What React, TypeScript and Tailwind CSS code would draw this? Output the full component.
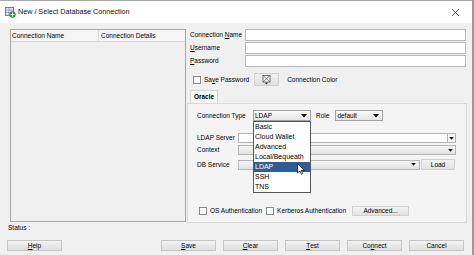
import React from 'react';

const ITEMS = ['Basic', 'Cloud Wallet', 'Advanced', 'Local/Bequeath', 'LDAP', 'SSH', 'TNS'];

function U({ children }: { children: React.ReactNode }) {
  return <span className="underline underline-offset-[1px] decoration-[0.5px]">{children}</span>;
}

function Arrow() {
  return (
    <svg width="6" height="4" viewBox="0 0 6 4">
      <path d="M0 0 H6 L3 3.5 Z" fill="#111" />
    </svg>
  );
}

function Check() {
  return <div className="w-[8px] h-[8px] border border-[#8a8a8a] bg-white shrink-0" />;
}

function Btn({ children, w = 'w-[55px]' }: { children: React.ReactNode; w?: string }) {
  return (
    <div className={`${w} h-[11px] flex items-center justify-center border border-[#c4c4c4] bg-linear-to-b from-[#f3f3f3] to-[#dedede] text-[6.5px] text-black`}>
      {children}
    </div>
  );
}

function Field() {
  return <div className="h-[12px] w-[221px] border border-[#b9b9b9] bg-white" />;
}

export default function App() {
  return (
    <div className="w-[474px] h-[255px] bg-[#9a9a9a] overflow-hidden font-['Liberation_Sans',Arial,sans-serif] text-black">
      <div className="w-[472px] h-[255px] bg-[#f0f0f0] border-t border-[#a8a8a8] flex flex-col">
        {/* title bar */}
        <div className="h-[22px] bg-white flex items-center pl-[5px] pr-[12px] shrink-0">
          <svg width="11" height="11" viewBox="0 0 11 11">
            <rect x="0.5" y="0.5" width="8" height="8" fill="#dfe9f5" stroke="#5a7fae" />
            <path d="M1 3 H8 M1 5.5 H8 M4 1 V8" stroke="#7b9cc6" strokeWidth="0.8" />
            <circle cx="7.5" cy="7.5" r="3.2" fill="#2e9a2e" />
            <path d="M7.5 5.6 V9.4 M5.6 7.5 H9.4" stroke="#fff" strokeWidth="1.1" />
          </svg>
          <span className="ml-[2px] text-[7.2px] text-[#111]">New / Select Database Connection</span>
          <svg className="ml-auto" width="9" height="9" viewBox="0 0 9 9">
            <path d="M1 1 L8 8 M8 1 L1 8" stroke="#333" strokeWidth="0.8" />
          </svg>
        </div>

        <div className="flex pt-[6px] pl-[10px]">
          {/* connection list */}
          <div className="w-[176px] h-[193px] border border-[#a6a6a6] bg-[#f0f0f0] flex flex-col">
            <div className="flex h-[12px] border-b border-[#d9d9d9] bg-[#f5f5f5] text-[6.5px]">
              <div className="w-[88px] pl-[1px] border-r border-[#d9d9d9] flex items-center">Connection Name</div>
              <div className="pl-[2px] flex items-center">Connection Details</div>
            </div>
          </div>

          {/* right side */}
          <div className="ml-[1px] w-[280px] flex flex-col text-[6.5px]">
            <div className="flex flex-col gap-[1px]">
              <div className="flex items-center">
                <div className="w-[58px] pl-[3px]">Connection <U>N</U>ame</div>
                <Field />
              </div>
              <div className="flex items-center">
                <div className="w-[58px] pl-[3px]"><U>U</U>sername</div>
                <Field />
              </div>
              <div className="flex items-center">
                <div className="w-[58px] pl-[3px]"><U>P</U>assword</div>
                <Field />
              </div>
            </div>

            <div className="mt-[6px] h-[13px] flex items-center pl-[6px]">
              <Check />
              <span className="ml-[3px]">Sa<U>v</U>e Password</span>
              <div className="ml-[5px] w-[25px] h-[13px] border border-[#d0d0d0] bg-linear-to-b from-[#f2f2f2] to-[#e0e0e0] flex items-center justify-center">
                <svg width="9" height="10" viewBox="0 0 9 10">
                  <rect x="1" y="0.5" width="7" height="6.5" fill="#fff" stroke="#333" strokeWidth="0.7" />
                  <path d="M1.5 1 L7.5 6.5 M7.5 1 L1.5 6.5" stroke="#333" strokeWidth="0.6" />
                  <path d="M3 7.8 H6 L4.5 9.6 Z" fill="#111" />
                </svg>
              </div>
              <span className="ml-[8px]">Connection Color</span>
            </div>

            {/* tab */}
            <div className="mt-[4px] pl-[3px] flex">
              <div className="w-[28px] h-[13px] border border-b-0 border-[#d4d4d4] bg-[#f7f7f7] flex items-center justify-center font-bold">
                Oracle
              </div>
            </div>
            <div className="h-[120px] border border-[#d9d9d9] bg-[#f4f4f4] pt-[6px] pl-[9px] flex flex-col">
              <div className="h-[11px] flex items-center">
                <div className="w-[56px]">Connection Type</div>
                <div className="relative">
                  <div className="w-[58px] h-[11px] border border-[#a0a0a0] bg-linear-to-b from-[#fbfbfb] to-[#e6e6e6] flex items-center pl-[1px] pr-[3px]">
                    <span>LDAP</span>
                    <span className="ml-auto"><Arrow /></span>
                  </div>
                  <div className="absolute left-0 top-full w-[58px] h-[72px] border border-[#555] bg-white flex flex-col z-10">
                    {ITEMS.map((it) => (
                      <div
                        key={it}
                        className={`h-[10px] flex items-center pl-[1px] text-[7px] ${it === 'LDAP' ? 'bg-[#2f5d99] text-white' : ''}`}
                      >
                        {it}
                      </div>
                    ))}
                    <svg className="absolute left-[43px] top-[41px]" width="8" height="12" viewBox="0 0 8 12">
                      <path d="M0.5 0.5 V10 L2.8 7.8 L4.4 11.3 L5.8 10.7 L4.2 7.3 H7.3 Z" fill="#fff" stroke="#000" strokeWidth="0.7" />
                    </svg>
                  </div>
                </div>
                <span className="ml-[5px]">Role</span>
                <div className="ml-[6px] w-[48px] h-[11px] border border-[#a0a0a0] bg-linear-to-b from-[#fbfbfb] to-[#e6e6e6] flex items-center pl-[1px] pr-[3px]">
                  <span>default</span>
                  <span className="ml-auto"><Arrow /></span>
                </div>
              </div>

              <div className="mt-[12px] h-[10px] flex items-center">
                <div className="w-[41px]">LDAP Server</div>
                <div className="w-[210px] h-[10px] border border-[#b5b5b5] bg-white" />
                <div className="w-[8px] h-[10px] border border-l-0 border-[#b5b5b5] bg-[#f4f4f4] flex items-center justify-center">
                  <svg width="5" height="3" viewBox="0 0 6 4"><path d="M0 0 H6 L3 3.5 Z" fill="#111" /></svg>
                </div>
              </div>

              <div className="mt-[2px] h-[10px] flex items-center">
                <div className="w-[41px]">Context</div>
                <div className="w-[218px] h-[10px] border border-[#b5b5b5] bg-linear-to-b from-[#f5f5f5] to-[#e2e2e2] flex items-center justify-end pr-[2px]">
                  <svg width="5" height="3" viewBox="0 0 6 4"><path d="M0 0 H6 L3 3.5 Z" fill="#111" /></svg>
                </div>
              </div>

              <div className="mt-[4px] h-[11px] flex items-center">
                <div className="w-[41px]">DB Service</div>
                <div className="w-[182px] h-[10px] border border-[#b5b5b5] bg-linear-to-b from-[#f5f5f5] to-[#e2e2e2] flex items-center justify-end pr-[3px]">
                  <svg width="5" height="3" viewBox="0 0 6 4"><path d="M0 0 H6 L3 3.5 Z" fill="#111" /></svg>
                </div>
                <div className="ml-[1px] w-[34px] h-[11px] border border-[#d0d0d0] bg-linear-to-b from-[#f3f3f3] to-[#e2e2e2] flex items-center justify-center">
                  Load
                </div>
              </div>

              <div className="mt-[36px] h-[10px] flex items-center pl-[2px]">
                <Check />
                <span className="ml-[3px]">OS Authentication</span>
                <div className="ml-[4px]"><Check /></div>
                <span className="ml-[3px]">Kerberos Authentication</span>
                <div className="ml-[6px] w-[57px] h-[10px] border border-[#d0d0d0] bg-linear-to-b from-[#f3f3f3] to-[#e2e2e2] flex items-center justify-center">
                  Advanced...
                </div>
              </div>
            </div>
          </div>
        </div>

        <div className="h-[9px] pl-[8px] flex items-center text-[6.5px]">Status :</div>

        <div className="mt-[8px] flex items-center pl-[7px]">
          <Btn><U>H</U>elp</Btn>
          <div className="ml-[99px] flex gap-[7px]">
            <Btn><U>S</U>ave</Btn>
            <Btn><U>C</U>lear</Btn>
            <Btn><U>T</U>est</Btn>
            <Btn>Co<U>n</U>nect</Btn>
            <Btn>Cancel</Btn>
          </div>
        </div>
      </div>
    </div>
  );
}
